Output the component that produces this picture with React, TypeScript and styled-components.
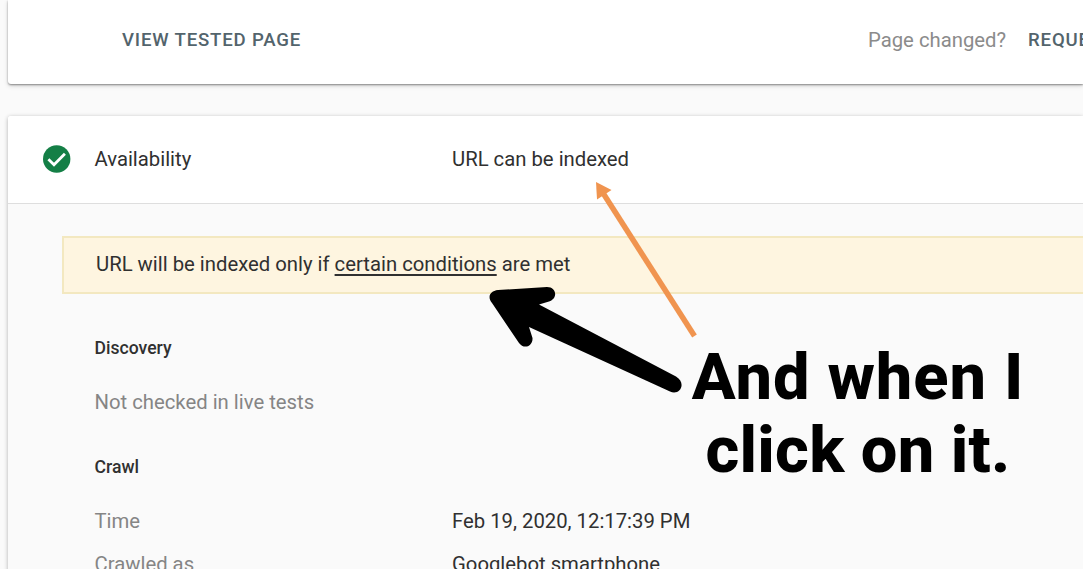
import React from 'react';
import styled, { createGlobalStyle } from 'styled-components';

interface DetailItem {
  label: string;
  value?: string;
}

interface DetailSection {
  title: string;
  items: DetailItem[];
}

const sections: DetailSection[] = [
  {
    title: 'Discovery',
    items: [{ label: 'Not checked in live tests' }],
  },
  {
    title: 'Crawl',
    items: [
      { label: 'Time', value: 'Feb 19, 2020, 12:17:39 PM' },
      { label: 'Crawled as', value: 'Googlebot smartphone' },
    ],
  },
];

const GlobalStyle = createGlobalStyle`
  * {
    box-sizing: border-box;
  }

  body {
    margin: 0;
    overflow: hidden;
    background: #fafafa;
    font-family: Roboto, "Liberation Sans", sans-serif;
  }
`;

const Page = styled.main`
  position: relative;
  display: flex;
  flex-direction: column;
  gap: 32px;
  width: 1083px;
  height: 569px;
  padding-left: 8px;
  overflow: hidden;
  color: #303030;
  font-size: 20.3px;
  line-height: 24px;
  white-space: nowrap;
`;

const ActionCard = styled.section`
  display: flex;
  flex: none;
  align-items: center;
  justify-content: space-between;
  height: 84px;
  padding: 0 0 5px 114px;
  background: #fff;
  border-radius: 0 0 0 3px;
  box-shadow: 0 1px 2px rgba(0, 0, 0, 0.4), 0 2px 5px rgba(0, 0, 0, 0.14);
`;

const ActionGroup = styled.div`
  display: flex;
  gap: 22px;
  width: 215px;
  overflow: hidden;
`;

const ActionButton = styled.button`
  padding: 0;
  border: 0;
  background: none;
  color: #53646c;
  font: 500 18.6px/24px Roboto, "Liberation Sans", sans-serif;
  letter-spacing: 0.83px;
  cursor: pointer;
`;

const Hint = styled.span`
  color: #8b8b8b;
`;

const StatusCard = styled.section`
  flex: none;
  height: 500px;
  background: #fafafa;
  border-radius: 3px 0 0 0;
  box-shadow: 0 1px 4px rgba(0, 0, 0, 0.3);
`;

const StatusHeader = styled.header`
  display: grid;
  grid-template-columns: 51.5px 357.5px 1fr;
  align-items: center;
  height: 88px;
  padding: 0 0 1px 35px;
  background: #fff;
  border-bottom: 1px solid #dedede;
  border-radius: 3px 0 0 0;
`;

const StatusIcon = styled.svg`
  display: block;
  width: 28px;
  height: 28px;
`;

const Notice = styled.div`
  display: flex;
  align-items: center;
  height: 58px;
  margin: 32px 0 0 54px;
  padding: 0 0 2px 32px;
  background: #fef5e0;
  border: 2px solid #f3e8c0;
  border-right: 0;
  white-space: pre;
`;

const NoticeLink = styled.a`
  color: inherit;
  text-decoration: underline;
  text-decoration-thickness: 2px;
  text-underline-offset: 3px;
  text-decoration-skip-ink: none;
  cursor: pointer;
`;

const Details = styled.div`
  display: flex;
  flex-direction: column;
  gap: 41px;
  padding: 42px 0 0 86.5px;
`;

const SectionTitle = styled.h2`
  margin: 0 0 30px;
  font-size: 17.6px;
  font-weight: 500;
  line-height: 24px;
`;

const DetailRow = styled.div`
  display: grid;
  grid-template-columns: 357.5px 1fr;
  height: 24px;

  & + & {
    margin-top: 19px;
  }
`;

const DetailLabel = styled.span`
  color: #858585;
`;

const Arrows = styled.svg`
  position: absolute;
  top: 0;
  left: 0;
  pointer-events: none;
`;

const Callout = styled.p`
  position: absolute;
  top: 341px;
  left: 691px;
  width: 334px;
  margin: 0;
  color: #000;
  font-size: 65px;
  font-weight: 800;
  line-height: 73px;
  text-align: center;
`;

const CalloutLine = styled.span<{ $spacing: string }>`
  display: block;
  letter-spacing: ${({ $spacing }) => $spacing};
`;

export default function App() {
  return (
    <>
      <GlobalStyle />
      <Page>
        <ActionCard>
          <ActionButton>VIEW TESTED PAGE</ActionButton>
          <ActionGroup>
            <Hint>Page changed?</Hint>
            <ActionButton>REQUEST INDEXING</ActionButton>
          </ActionGroup>
        </ActionCard>

        <StatusCard>
          <StatusHeader>
            <StatusIcon viewBox="0 0 28 28">
              <circle cx="13.7" cy="14" r="13.7" fill="#147f46" />
              <path d="M5.4 14.2 11 19.7 21.9 8.8" fill="none" stroke="#fff" strokeWidth="2.8" />
            </StatusIcon>
            <span>Availability</span>
            <span>URL can be indexed</span>
          </StatusHeader>

          <Notice>
            URL will be indexed only if <NoticeLink>certain conditions</NoticeLink> are met
          </Notice>

          <Details>
            {sections.map((section) => (
              <section key={section.title}>
                <SectionTitle>{section.title}</SectionTitle>
                {section.items.map((item) => (
                  <DetailRow key={item.label}>
                    <DetailLabel>{item.label}</DetailLabel>
                    {item.value && <span>{item.value}</span>}
                  </DetailRow>
                ))}
              </section>
            ))}
          </Details>
        </StatusCard>

        <Arrows width="1083" height="569" viewBox="0 0 1083 569">
          <path d="M603 193 694.5 336" fill="none" stroke="#f0944f" strokeWidth="5.5" />
          <path d="M596 182 611.5 190 597 199.5Z" fill="#f0944f" />
          <path
            d="M498 290 547 287C557 287 558 299 549 301.5L539 304.5 676 376.5C687 383 680 396 670 391.5L529 327 532.5 338C533 346 524 350 519 343L492 303C487 297 490 291 498 290Z"
            fill="#000"
          />
        </Arrows>

        <Callout>
          <CalloutLine $spacing="0.9px">And when I</CalloutLine>
          <CalloutLine $spacing="0.2px">click on it.</CalloutLine>
        </Callout>
      </Page>
    </>
  );
}
